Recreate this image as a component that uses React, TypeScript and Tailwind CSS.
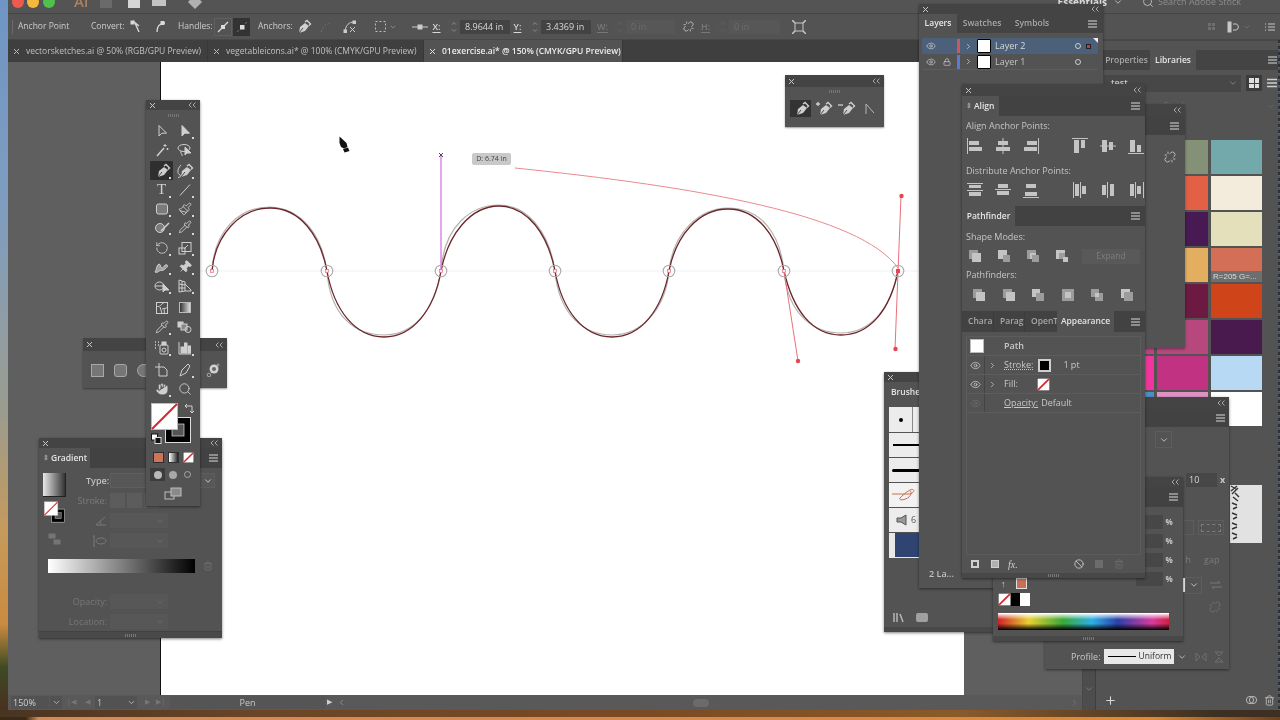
import React from "react";
import { Hand, Search, Pipette, Paintbrush, RotateCcw, Pin, Plus, ChevronDown, ChevronRight, ChevronLeft, ChevronUp, Trash2, Lock, Eye, Ban, Unlink } from "lucide-react";

const S = ({ w = 16, h = 16, vb, children, className = "" }: { w?: number; h?: number; vb?: string; children: React.ReactNode; className?: string }) => (
  <svg width={w} height={h} viewBox={vb ?? `0 0 ${w} ${h}`} className={`shrink-0 ${className}`} fill="none" stroke="currentColor" strokeWidth={1}>
    {children}
  </svg>
);

const Nib = ({ plus, minus, curve }: { plus?: boolean; minus?: boolean; curve?: boolean }) => (
  <S w={18} h={16}>
    <path d="M5 14 L6 8 L11 4 L15 7 L11 12 Z" fill="currentColor" stroke="none" />
    <path d="M5 14 L9 9" stroke="#4a4a4a" />
    <path d="M11 3 L13 1.5 L16.5 5 L15 6.5" stroke="currentColor" strokeWidth={1.4} />
    {plus && <path d="M1 3 H5 M3 1 V5" strokeWidth={1.3} />}
    {minus && <path d="M0 4 H5" strokeWidth={1.3} />}
    {curve && <path d="M5 2 C1 6 1 11 4 12 C6 12.5 5 14 2 14.5" />}
  </S>
);

const Bars = ({ r }: { r: number[][] }) => (
  <S w={18} h={18}>
    {r.map((a, i) => (
      <rect key={i} x={a[0]} y={a[1]} width={a[2]} height={a[3]} fill={a[4] ? "#9c9c9c" : "#c4c4c4"} stroke="none" />
    ))}
  </S>
);

const Close = ({ c = "#c8c8c8" }: { c?: string }) => (
  <svg width="7" height="7" viewBox="0 0 7 7" stroke={c} strokeWidth="1" className="shrink-0"><path d="M1 1 L6 6 M6 1 L1 6" /></svg>
);
const Collapse = () => (
  <svg width="8" height="6" viewBox="0 0 8 6" stroke="#a8a8a8" fill="none" className="shrink-0"><path d="M3.5 0.5 L1 3 L3.5 5.5 M7.5 0.5 L5 3 L7.5 5.5" /></svg>
);
const Menu = () => (
  <div className="flex flex-col gap-px w-[9px] shrink-0">
    <div className="h-[2px] bg-[#8e8e8e]" /><div className="h-[2px] bg-[#8e8e8e]" /><div className="h-[2px] bg-[#8e8e8e]" />
  </div>
);
const Head = ({ h = "h-[12px]", close = true }: { h?: string; close?: boolean }) => (
  <div className={`${h} bg-[#444444] flex items-center justify-between pl-[3px] pr-[4px] shrink-0`}>
    {close ? <Close /> : <span />}
    <Collapse />
  </div>
);
const Grip = () => (
  <div className="flex justify-center gap-px">
    {[0, 1, 2, 3, 4, 5].map((i) => <div key={i} className="w-px h-[3px] bg-[#777777]" />)}
  </div>
);
const Label = ({ children, className = "" }: { children: React.ReactNode; className?: string }) => (
  <div className={`h-[12px] leading-[12px] text-[9px] text-[#c4c4c4] pl-[4px] ${className}`}>{children}</div>
);

const NoneSwatch = ({ s = 12 }: { s?: number }) => (
  <svg width={s} height={s} viewBox="0 0 12 12" className="shrink-0"><rect width="12" height="12" fill="#fff" stroke="#222" /><path d="M1 11 L11 1" stroke="#d3272e" strokeWidth="1.6" /></svg>
);

const FillStroke = ({ w, h, big }: { w: number; h: number; big?: boolean }) => (
  <svg width={w} height={h} viewBox="0 0 46 42" className="shrink-0">
    <rect x="14.5" y="14.5" width="25" height="25" fill="#000" stroke="#ddd" />
    <rect x="21" y="21" width="12" height="12" fill="#555" stroke="#ddd" strokeWidth="0.7" />
    <rect x="0.5" y="0.5" width="26" height="26" fill="#fff" stroke="#bbb" />
    <path d="M1 26 L26 1" stroke="#d3272e" strokeWidth="2" />
    {big && <path d="M34 3 H41 V10 M34 3 L36 1 M34 3 L36 5 M41 10 L39 8 M41 10 L43 8" stroke="#cfcfcf" fill="none" />}
    {big && <g><rect x="0.5" y="31" width="6" height="6" fill="#fff" stroke="#111" /><rect x="4" y="34.5" width="6" height="6" fill="#111" stroke="#ddd" /></g>}
  </svg>
);

type Tool = { i: React.ReactNode; dot?: boolean; on?: boolean };
const lucide = { size: 14, strokeWidth: 1.5 };

const tools: { mt: string; a: Tool; b: Tool }[] = [
  { mt: "", a: { i: <S w={14} h={14}><path d="M4 1.5 V12 L6.8 9.2 L11.5 9.2 Z" /></S> }, b: { dot: true, i: <S w={14} h={14}><path d="M4 1.5 V12 L6.8 9.2 L11.5 9.2 Z" fill="currentColor" /></S> } },
  { mt: "", a: { i: <S w={14} h={14}><path d="M2 13 L9 5" strokeWidth={1.5} /><path d="M10 1 V4 M8.5 2.5 H11.5 M12.5 5 V7 M11.5 6 H13.5" /></S> }, b: { i: <S w={16} h={14}><ellipse cx="7" cy="5" rx="6" ry="3.5" /><path d="M4 8 C3 11 6 11 5 13" /><path d="M8 4 V12 L10 10 L14 10 Z" fill="currentColor" /></S> } },
  { mt: "mt-[2px]", a: { on: true, dot: true, i: <Nib /> }, b: { dot: true, i: <Nib curve /> } },
  { mt: "", a: { dot: true, i: <span className="text-[15px] leading-[15px] font-['Liberation_Serif',serif]">T</span> }, b: { dot: true, i: <S w={14} h={14}><path d="M2 12.5 L12 1.5" /></S> } },
  { mt: "", a: { dot: true, i: <S w={14} h={14}><rect x="1.5" y="2" width="11" height="10" rx="2" fill="#7b7b7b" /></S> }, b: { dot: true, i: <Paintbrush {...lucide} /> } },
  { mt: "-mt-px", a: { dot: true, i: <S w={16} h={14}><circle cx="6" cy="8" r="4.5" fill="#7b7b7b" /><path d="M7 11 L15 3" strokeWidth={1.6} /></S> }, b: { dot: true, i: <Pipette {...lucide} /> } },
  { mt: "mt-[2px]", a: { dot: true, i: <RotateCcw {...lucide} strokeDasharray="3 1.5" /> }, b: { dot: true, i: <S w={14} h={14}><rect x="1" y="7" width="6" height="6" /><rect x="4" y="1.5" width="9" height="9" /><path d="M6 8 L10 4" /></S> } },
  { mt: "", a: { dot: true, i: <S w={16} h={14}><path d="M1 12 C3 10 2 5 5 4 C7 4 6 8 8 8 C10 8 10 4 13 5 C15 6 12 8 11 9 C9 11 7 10 5 11 C4 12 3 13 1 12 Z" fill="#a0a0a0" /></S> }, b: { dot: true, i: <Pin {...lucide} fill="currentColor" className="rotate-45" /> } },
  { mt: "", a: { dot: true, i: <S w={16} h={14}><ellipse cx="5.5" cy="7" rx="4.5" ry="4" /><path d="M1 7 H10" /><path d="M9 5 V13 L11 11 L15 11 Z" fill="currentColor" /></S> }, b: { dot: true, i: <S w={16} h={14}><path d="M2 1 L8 3 V12 L2 13 Z M8 5 L14 11 V12 H8 M2 5 L8 6 M2 9 L8 9 M5 2 V13" /></S> } },
  { mt: "mt-[3px]", a: { i: <S w={14} h={14}><rect x="1.5" y="1.5" width="11" height="11" /><path d="M1.5 5 C5 7 6 3 9 1.5 M5 6 L7 12.5 M7 8 C9 7 11 8 12.5 6 M9 7.5 L9.5 12.5" /></S> }, b: { i: <div className="w-[12px] h-[11px] border border-[#bbbbbb] bg-[linear-gradient(90deg,#333,#ddd)]" /> } },
  { mt: "", a: { dot: true, i: <Pipette {...lucide} /> }, b: { i: <S w={15} h={14}><rect x="1" y="2" width="5" height="5" fill="currentColor" /><rect x="4" y="4" width="6" height="6" fill="#888" /><circle cx="11" cy="9.5" r="3" /></S> } },
  { mt: "mt-[2px]", a: { dot: true, i: <S w={16} h={15}><path d="M1 2 H2 M4 2 H5 M1 5 H2 M4 5 H5 M1 8 H2" strokeWidth={1.4} /><rect x="6" y="5" width="8" height="9" rx="1" /><rect x="8" y="2" width="4" height="3" fill="currentColor" /><circle cx="10" cy="10" r="2" /></S> }, b: { dot: true, i: <S w={14} h={14}><path d="M1 1 V13 H13" /><rect x="3" y="6" width="2.5" height="6" fill="currentColor" /><rect x="6.5" y="2" width="2.5" height="10" fill="currentColor" /><rect x="10" y="5" width="2.5" height="7" fill="currentColor" /></S> } },
  { mt: "mt-[3px]", a: { i: <S w={14} h={14}><path d="M4 0 V4 M0 4 H4 M4 4 H9 L12 7 V13 H4 Z" /></S> }, b: { dot: true, i: <S w={14} h={14}><path d="M2 13 L4 7 L10 1 L12 3 L8 10 Z" /></S> } },
  { mt: "", a: { dot: true, i: <Hand {...lucide} fill="currentColor" stroke="#555" strokeWidth={1} /> }, b: { i: <Search {...lucide} /> } },
];

const Cell = ({ t }: { t: Tool }) => (
  <div className={`relative w-[23px] h-[19px] flex items-center justify-center text-[#cfcfcf] ${t.on ? "bg-[#2f2f2f] rounded-[1px]" : ""}`}>
    {t.i}
    {t.dot && <span className="absolute right-[2px] bottom-[1px] w-[2px] h-[2px] bg-[#d8d8d8]" />}
  </div>
);

const wave = "M212 271 C215 235 240 208 270 208 C300 208 320 235 327 271 C334 310 355 337 384 337 C413 337 434 310 441 271 C448 235 470 206 499 206 C528 206 548 235 555 271 C562 310 583 337 612 337 C641 337 662 310 669 271 C676 235 699 209 728 209 C757 209 777 235 784 271 C793 310 812 335 841 335 C870 335 890 310 898 271";
const ghost = "M212 271 C214 232 238 207 270 207 C302 208 322 236 327 271 C330 316 355 335 384 335 C416 335 436 306 441 271 C444 225 472 205 499 205 C530 205 550 236 555 271 C559 316 585 335 612 335 C644 335 666 306 669 271 C673 232 700 208 728 208 C760 208 780 232 784 271 C788 316 815 333 841 333 C872 333 892 306 898 271";
const anchors = [212, 327, 441, 555, 669, 784, 898];

const Artwork = () => (
  <svg className="absolute inset-0" width="803" height="633" viewBox="161 62 803 633" fill="none">
    <path d="M161 271 H964" stroke="#eef1f3" />
    <path d={ghost} stroke="#b5b0b0" strokeWidth="1.2" />
    <path d={wave} stroke="#6a272b" strokeWidth="1.3" />
    <path d="M441 155 V271" stroke="#d678e4" strokeWidth="1.3" />
    <path d="M439 153 L443 157 M443 153 L439 157" stroke="#5a3b66" />
    <path d="M515 168 C700 187 860 215 898 268" stroke="#ea8a90" />
    <path d="M901 196 L895 349" stroke="#ea7079" />
    <path d="M784 271 L798 361" stroke="#ea7079" />
    {anchors.map((x) => (
      <g key={x}>
        <circle cx={x} cy="271" r="5.8" stroke="#a9a9a9" strokeWidth="1.1" />
        <rect x={x - 1.5} y="269.5" width="3" height="3" stroke="#ee6b78" fill="#ffe0e4" strokeWidth="0.7" />
      </g>
    ))}
    <rect x="896" y="269" width="4" height="4" fill="#e8434f" />
    <circle cx="901.5" cy="196" r="2.2" fill="#e8434f" />
    <circle cx="895.5" cy="349" r="2.2" fill="#e8434f" />
    <circle cx="798" cy="361" r="2.2" fill="#e8434f" />
    <path d="M339.5 136.5 L346.5 143 L347.5 147 L344 148.5 L341 147 L339.5 143 Z" fill="#111" />
    <path d="M343 149 L348 147.5 L349.5 151 L344.5 152.5 Z" fill="#111" />
  </svg>
);

const lib = [
  ["#5b7a80", "#849176", "#74a9ac"],
  ["#b84a35", "#e35f45", "#f3ecdc"],
  ["#2f1538", "#481a54", "#e5e0bc"],
  ["#b08040", "#e3ae5f", "#d46f57"],
  ["#7a1a3a", "#6c1a42", "#cf4419"],
  ["#b6487e", "#b6487e", "#481a4e"],
  ["#f0369e", "#c23283", "#b7d9f3"],
  ["#4d8fc4", "#de93c3", "#ffffff"],
];

const Field = ({ label, v, dim, w }: { label: string; v: string; dim?: boolean; w: string }) => (
  <div className={`flex items-center ${dim ? "text-[#777777]" : "text-[#d8d8d8]"}`}>
    <span className="text-[9px] font-semibold underline underline-offset-2 w-[13px] text-center">{label}</span>
    <div className={`${w} h-[14px] ml-[4px] flex items-center ${dim ? "bg-[#575757]" : "bg-[#434343]"}`}>
      <div className={`w-[13px] h-full flex flex-col items-center justify-center ${dim ? "text-[#6f6f6f]" : "text-[#cfcfcf]"} bg-[#545454]`}>
        <ChevronUp size={8} strokeWidth={1.5} /><ChevronDown size={8} strokeWidth={1.5} />
      </div>
      <span className={`ml-[5px] text-[9px] ${dim ? "text-[#6c6c6c]" : ""}`}>{v}</span>
    </div>
  </div>
);

const Dd = ({ w }: { w: string }) => (
  <div className={`${w} h-[15px] bg-[#575757] flex items-center justify-end pr-[3px] text-[#6d6d6d]`}><ChevronDown size={10} /></div>
);

const Pct = () => (
  <div className="flex items-center justify-end gap-[1px] h-[14px]">
    <div className="w-[27px] h-[14px] bg-[#474747]" />
    <span className="w-[10px] text-[8px] font-bold text-[#c8c8c8] text-center">%</span>
  </div>
);

const AppRow = ({ eye = true, children, mid }: { eye?: boolean; children: React.ReactNode; mid?: boolean }) => (
  <div className="h-[19px] flex items-center border-b border-[#5d5d5d] text-[9px] text-[#c8c8c8]">
    <div className={`w-[18px] h-full flex items-center justify-center border-r border-[#444444] ${eye ? "text-[#cdcdcd]" : "text-[#6f6f6f]"}`}><Eye size={11} strokeWidth={1.6} /></div>
    <div className="w-[19px] pl-[3px] flex text-[#c8c8c8]">{mid && <ChevronRight size={9} />}</div>
    {children}
  </div>
);

const pathIcon = (r: number[][]) => <Bars r={r} />;

export default function App() {
  return (
    <div className="relative w-[1280px] h-[720px] overflow-hidden flex flex-col bg-[#3a2c20] font-['Open_Sans',sans-serif] blur-[0.4px]">
      <div className="flex h-[710px]">
        <div className="w-[8px] bg-[linear-gradient(180deg,#6f95c4_0%,#7f9dbf_30%,#9b9c8e_58%,#c59a5a_75%,#c98b3f_88%,#3f4a24_94%,#4a3020_100%)]" />
        <div className="flex-1 flex flex-col min-w-0 bg-[#535353]">
          {/* title bar */}
          <div className="h-[14px] overflow-hidden bg-[#545454] flex items-center shrink-0 border-b border-[#454545]">
            <div className="flex items-center -mt-[10px] w-full">
              <span className="ml-[4px] w-[12px] h-[12px] rounded-full bg-[#ee5a4f]" />
              <span className="ml-[3px] w-[12px] h-[12px] rounded-full bg-[#f5b93c]" />
              <span className="ml-[4px] w-[12px] h-[12px] rounded-full bg-[#4fc14c]" />
              <span className="ml-[19px] text-[15px] leading-[15px] font-semibold text-[#b0805c]">Ai</span>
              <span className="ml-[12px] w-[12px] h-[12px] bg-[#6a6a6a]" />
              <span className="ml-[16px] w-[12px] h-[12px] bg-[#d5d5d5]" />
              <span className="ml-[12px] w-[14px] h-[9px] bg-[#c4c4c4]" />
              <span className="ml-[24px] w-[10px] h-[10px] bg-[#b0b0b0] rotate-45" />
              <span className="ml-auto text-[10px] leading-[10px] font-bold text-[#dcdcdc]">Essentials</span>
              <ChevronDown size={10} className="ml-[6px] text-[#cfcfcf]" />
              <Search size={12} className="ml-[19px] text-[#b5b5b5]" />
              <span className="ml-[4px] mr-[39px] text-[9px] leading-[10px] text-[#8c8c8c]">Search Adobe Stock</span>
            </div>
          </div>
          {/* control bar */}
          <div className="h-[26px] shrink-0 bg-[#535353] border-b border-[#484848] flex items-center text-[8.5px] font-medium text-[#cccccc] relative">
            <div className="ml-[4px] w-px h-[14px] bg-[#6a6a6a]" />
            <span className="ml-[5px] w-[49px] whitespace-nowrap">Anchor Point</span>
            <span className="ml-[24px] w-[33px]">Convert:</span>
            <div className="ml-[4px] w-[16px] flex justify-center text-[#d8d8d8]"><S w={12} h={13}><path d="M3 1 L9 6 M5 3 L9 12" strokeWidth={1.4} /><rect x="1" y="1" width="3" height="3" fill="currentColor" /></S></div>
            <div className="ml-[8px] w-[16px] flex justify-center text-[#d8d8d8]"><S w={12} h={13}><path d="M3 12 C3 6 5 4 11 3" strokeWidth={1.3} /><rect x="7" y="1.5" width="3" height="3" fill="currentColor" /></S></div>
            <span className="ml-[10px] w-[36px]">Handles:</span>
            <div className="w-[18px] h-[18px] flex items-center justify-center text-[#dcdcdc] border border-[#5f5f5f]"><S w={12} h={12}><path d="M1 11 L11 1" strokeWidth={1.3} /><rect x="4.5" y="4.5" width="3" height="3" fill="currentColor" /></S></div>
            <div className="ml-px w-[17px] h-[18px] flex items-center justify-center bg-[#333333] text-[#dcdcdc]"><S w={12} h={12}><rect x="4.5" y="4.5" width="3.5" height="3.5" fill="currentColor" /><path d="M1 11 L3 9 M9 3 L11 1" stroke="#6f6f6f" /></S></div>
            <span className="ml-[8px] w-[37px]">Anchors:</span>
            <div className="w-[16px] flex justify-center text-[#d0d0d0]"><Nib /></div>
            <div className="ml-[7px] w-[16px] flex justify-center text-[#6e6e6e]"><S w={12} h={12}><path d="M1 11 C3 5 6 3 11 2" strokeDasharray="2 1.5" /></S></div>
            <div className="ml-[8px] w-[16px] flex justify-center text-[#cccccc]"><S w={14} h={13}><path d="M2 11 C3 5 6 2 11 2" /><rect x="1" y="10" width="2.5" height="2.5" fill="currentColor" /><rect x="10" y="1" width="2.5" height="2.5" fill="currentColor" /><path d="M7 7 L12 12 M12 7 L7 12" /></S></div>
            <div className="ml-[14px] w-[17px] flex justify-center text-[#bdbdbd]"><S w={13} h={13}><rect x="1.5" y="1.5" width="10" height="10" strokeDasharray="2 2" /></S></div>
            <ChevronDown size={8} className="text-[#a0a0a0]" />
            <div className="ml-[15px] w-[16px] flex justify-center text-[#cccccc]"><S w={16} h={8}><path d="M0 4 H16" /><rect x="6" y="2" width="4" height="4" fill="currentColor" /></S></div>
            <div className="ml-[2px]"><Field label="X:" v="8.9644 in" w="w-[63px]" /></div>
            <div className="ml-[1px]"><Field label="Y:" v="3.4369 in" w="w-[63px]" /></div>
            <div className="ml-[5px]"><Field label="W:" v="0 in" dim w="w-[62px]" /></div>
            <div className="ml-[5px] w-[16px] flex justify-center text-[#bdbdbd]"><Unlink size={11} /></div>
            <div className="ml-[3px]"><Field label="H:" v="0 in" dim w="w-[64px]" /></div>
            <div className="ml-[12px] w-[14px] text-[#c8c8c8]"><S w={14} h={14}><rect x="3" y="3" width="8" height="8" /><path d="M0 0 L3 3 M14 0 L11 3 M0 14 L3 11 M14 14 L11 11" strokeWidth={1.5} /></S></div>
            <div className="ml-auto flex items-center pr-[5px]">
              <div className="grid grid-cols-2 gap-px"><i className="block w-[3px] h-[3px] bg-[#6f6f6f]" /><i className="block w-[3px] h-[3px] bg-[#6f6f6f]" /><i className="block w-[3px] h-[3px] bg-[#6f6f6f]" /><i className="block w-[3px] h-[3px] bg-[#6f6f6f]" /></div>
              <div className="ml-[12px] text-[#c8c8c8]"><S w={12} h={12}><rect x="1" y="1" width="3" height="10" fill="currentColor" /><path d="M6 3 H9 C12 3 12 9 9 9 H6" /></S></div>
              <ChevronDown size={8} className="ml-[4px] text-[#777777]" />
              <div className="ml-[14px] text-[#c8c8c8]"><S w={10} h={10}><path d="M0 2 H1 M3 2 H10 M0 5 H1 M3 5 H10 M0 8 H1 M3 8 H10" /></S></div>
            </div>
          </div>
          {/* body */}
          <div className="flex-1 flex min-h-0">
            <div className="w-[1074px] flex flex-col">
              <div className="h-[22px] bg-[#3f3f3f] flex items-stretch text-[8.5px] shrink-0">
                {[
                  ["vectorsketches.ai @ 50% (RGB/GPU Preview)", "w-[200px]", false],
                  ["vegetableicons.ai* @ 100% (CMYK/GPU Preview)", "w-[216px]", false],
                  ["01exercise.ai* @ 150% (CMYK/GPU Preview)", "w-[199px]", true],
                ].map(([t, w, on]) => (
                  <div key={t as string} className={`${w} flex items-center pl-[5px] border-r border-[#383838] ${on ? "bg-[#535353] text-[#ececec] font-semibold" : "text-[#c0c0c0] font-medium"}`}>
                    <Close c={on ? "#e0e0e0" : "#bbbbbb"} />
                    <span className="ml-[6px] whitespace-nowrap">{t}</span>
                  </div>
                ))}
              </div>
              <div className="flex-1 bg-[#5f5f5f] flex min-h-0 overflow-hidden">
                <div className="ml-[152px] w-[804px] h-full bg-white border-l border-[#111111] relative shrink-0">
                  <Artwork />
                  <div className="absolute left-[311px] top-[91px] w-[39px] h-[12px] rounded-[2px] bg-[#c9c9c9] text-[7px] leading-[12px] text-[#444444] text-center">D: 6.74 in</div>
                </div>
              </div>
              <div className="h-[15px] bg-[#595959] shrink-0 flex items-center text-[9px] text-[#c8c8c8]">
                <div className="ml-[3px] w-[38px] h-[13px] bg-[#525252] pl-[2px] leading-[13px] text-[#cfcfcf]">150%</div>
                <div className="ml-px w-[12px] h-[13px] bg-[#525252] flex items-center justify-center"><ChevronDown size={9} /></div>
                <div className="ml-[5px] w-[23px] flex justify-between text-[#767676] text-[7px]"><span>|◀</span><span>◀</span></div>
                <div className="ml-[5px] w-[30px] h-[13px] bg-[#525252] pl-[2px] leading-[13px]">1</div>
                <div className="w-[12px] h-[13px] bg-[#525252] flex items-center justify-center"><ChevronDown size={9} /></div>
                <div className="ml-[8px] w-[20px] flex justify-between text-[#767676] text-[7px]"><span>▶</span><span>▶|</span></div>
                <div className="ml-[5px] w-[155px] h-[13px] bg-[#555555] text-center leading-[13px]">Pen</div>
                <span className="ml-[2px] text-[7px] text-[#d0d0d0]">▶</span>
                <ChevronLeft size={9} className="ml-[5px] text-[#9a9a9a]" />
                <div className="ml-[347px] w-[16px] h-[8px] rounded-[4px] bg-[#6b6b6b]" />
                <ChevronRight size={9} className="ml-auto mr-[3px] text-[#7c7c7c]" />
              </div>
            </div>
            <div className="w-[13px] bg-[#4d4d4d] flex flex-col justify-end items-center pb-[16px] text-[#7c7c7c] border-l border-[#474747]"><ChevronDown size={10} /></div>
            {/* dock */}
            <div className="w-[183px] flex flex-col border-l border-[#3f3f3f] bg-[#535353]">
              <div className="h-[10px] border-t border-[#474747]" />
              <div className="h-[20px] bg-[#444444] flex items-stretch text-[8.5px] font-semibold pl-[7px] shrink-0">
                <div className="w-[47px] text-[#a8a8a8] flex items-center justify-center">Properties</div>
                <div className="w-[46px] bg-[#535353] text-[#e6e6e6] flex items-center justify-center">Libraries</div>
                <div className="ml-auto flex items-center pr-[1px]"><Menu /></div>
              </div>
              <div className="flex items-center h-[18px] mt-[4px] shrink-0">
                <div className="ml-[8px] w-[137px] h-[17px] bg-[#474747] flex items-center pl-[7px] text-[9px] font-semibold text-[#c8c8c8]">test<ChevronDown size={10} className="ml-auto mr-[3px] text-[#8a8a8a]" /></div>
                <div className="ml-[5px] w-[16px] h-[16px] bg-[#3b3b3b] grid grid-cols-2 gap-px p-[3px]"><i className="block bg-[#dedede]" /><i className="block bg-[#dedede]" /><i className="block bg-[#dedede]" /><i className="block bg-[#dedede]" /></div>
                <div className="ml-[5px] text-[#cfcfcf]"><S w={10} h={10}><path d="M0 1.5 H10 M0 5 H10 M0 8.5 H10" strokeWidth={1.5} /></S></div>
              </div>
              <div className="h-[20px] mt-[4px] flex items-center justify-end pr-[3px] text-[9px] text-[#6c6c6c] shrink-0"><span className="mr-[80px]">Stock</span><ChevronDown size={9} /></div>
              <div className="ml-[7px] mt-[24px] grid grid-cols-[51px_51px_51px] auto-rows-[34px] gap-x-[3px] gap-y-[2px] shrink-0">
                {lib.flatMap((row, r) => row.map((c, i) => (
                  r === 3 && i === 2 ? (
                    <div key={`${r}${i}`} className="flex flex-col" style={{ background: "#6e6e6e" }}>
                      <div className="h-[23px]" style={{ background: c }} />
                      <div className="flex-1 text-[8px] leading-[11px] text-[#dddddd] whitespace-nowrap pl-[2px] font-['Liberation_Sans',sans-serif]">R=205 G=...</div>
                    </div>
                  ) : <div key={`${r}${i}`} style={{ background: c }} />
                )))}
              </div>
              <div className="ml-[134px] mt-[59px] w-[32px] h-[58px] bg-[#e2e2e2] shrink-0">
                <S w={32} h={58} className="text-[#333333]"><path d="M1 1 L6 4 M7 1 L1 6 M8 3 L2 9 M5 8 L9 12 M3 12 L8 16 M2 18 L7 20 M3 24 L7 22 M2 28 L7 30 M3 34 L7 32 M2 38 L7 40 M2 44 L7 42 M2 48 L7 50 M3 54 L7 52" strokeWidth={1.4} /></S>
              </div>
              <div className="mt-auto h-[20px] flex items-center justify-between pl-[8px] pr-[3px] text-[#d8d8d8] shrink-0">
                <Plus size={13} strokeWidth={2} />
                <div className="flex items-center gap-[7px] text-[#b8b8b8]"><S w={12} h={10}><circle cx="5" cy="5" r="3.6" /><circle cx="8" cy="5" r="3.6" /></S><Trash2 size={11} /></div>
              </div>
            </div>
            <div className="w-[2px] bg-[repeating-linear-gradient(180deg,#303030_0,#303030_3px,#705f4d_3px,#705f4d_4px,#46566a_4px,#46566a_6px)]" />
          </div>
        </div>
      </div>
      <div className="h-[7px] bg-[linear-gradient(90deg,#4a3420,#6b4526_20%,#7a4a24_50%,#8a5a2a_75%,#3d3023_95%)]" />
      <div className="h-[3px] bg-[linear-gradient(90deg,#3a2a1a_2%,#d48a58_3%,#d98a4a_60%,#e0882f_90%,#6a4020)]" />

      {/* Pen mini panel */}
      <div className="absolute left-[785px] top-[75px] w-[99px] h-[52px] bg-[#535353] rounded-t-[2px] shadow-[0_1px_2px_rgba(0,0,0,0.4)]">
        <Head />
        <div className="mt-[3px]"><Grip /></div>
        <div className="mt-[7px] flex items-center pl-[5px] text-[#cfcfcf]">
          <div className="w-[21px] h-[17px] bg-[#333333] flex items-center justify-center"><Nib /></div>
          <div className="ml-[2px] w-[21px] flex justify-center"><Nib plus /></div>
          <div className="ml-[2px] w-[22px] flex justify-center"><Nib minus /></div>
          <div className="ml-[1px] w-[22px] flex justify-center text-[#b8b8b8]"><S w={10} h={12}><path d="M1 11 V1 L9 10" /></S></div>
        </div>
      </div>

      {/* Shapes panel */}
      <div className="absolute left-[83px] top-[338px] w-[144px] h-[50px] bg-[#535353] rounded-t-[2px] shadow-[0_1px_2px_rgba(0,0,0,0.4)]">
        <Head h="h-[13px]" />
        <div className="mt-[12px] flex items-center pl-[8px] text-[#a8a8a8]">
          <div className="w-[13px] h-[13px] bg-[#767676] border border-[#a8a8a8]" />
          <div className="ml-[10px] w-[13px] h-[13px] rounded-[3px] bg-[#767676] border border-[#a8a8a8]" />
          <div className="ml-[10px] w-[14px] h-[13px] rounded-full bg-[#767676] border border-[#a8a8a8]" />
          <div className="ml-auto mr-[7px]"><S w={14} h={14}><circle cx="8" cy="6" r="4.5" fill="#d0d0d0" stroke="none" /><circle cx="8" cy="6" r="2" fill="#666" stroke="none" /><circle cx="3" cy="12" r="1.8" /><circle cx="12" cy="2" r="1" /></S></div>
        </div>
      </div>

      {/* Gradient panel */}
      <div className="absolute left-[39px] top-[438px] w-[183px] h-[200px] bg-[#535353] rounded-t-[2px] shadow-[0_1px_3px_rgba(0,0,0,0.5)] flex flex-col text-[9px]">
        <Head h="h-[10px]" />
        <div className="h-[20px] bg-[#424242] flex items-stretch justify-between pr-[4px] shrink-0">
          <div className="w-[51px] bg-[#535353] flex items-center pl-[4px] text-[8.5px] font-semibold text-[#e4e4e4]">
            <span className="text-[7px] text-[#a0a0a0] mr-[2px]">⇕</span>Gradient
          </div>
          <div className="flex items-center"><Menu /></div>
        </div>
        <div className="flex mt-[5px]">
          <div className="w-[47px] pl-[4px] shrink-0">
            <div className="w-[23px] h-[24px] border-r border-b border-[#222222] bg-[linear-gradient(90deg,#e8e8e8,#333)]" />
            <div className="mt-[4px] ml-[1px]"><FillStroke w={24} h={23} /></div>
            <div className="mt-[9px] ml-[5px] text-[#747474]"><S w={14} h={12}><rect x="1" y="1" width="6" height="4" fill="currentColor" /><rect x="6" y="7" width="6" height="4" fill="currentColor" /></S></div>
          </div>
          <div className="flex-1 flex flex-col">
            <div className="flex items-center h-[15px]">
              <span className="w-[21px] font-semibold text-[#c0c0c0] text-right">Type:</span>
              <div className="ml-[3px] w-[105px] h-[15px] bg-[#575757] border border-[#5e5e5e] flex items-center justify-end pr-[1px] text-[#dcdcdc]"><ChevronDown size={10} /></div>
            </div>
            <div className="flex items-center h-[15px] mt-[5px] ml-[-9px]">
              <span className="w-[30px] text-[#7b7b7b] text-right">Stroke:</span>
              <div className="ml-[3px] w-[15px] h-[15px] bg-[#5c5c5c]" />
              <div className="ml-[2px] w-[15px] h-[15px] bg-[#5c5c5c]" />
              <div className="ml-[2px] w-[15px] h-[15px] bg-[#5c5c5c]" />
            </div>
            <div className="flex items-center h-[15px] mt-[5px]">
              <div className="w-[21px] flex justify-end text-[#787878]"><S w={12} h={10}><path d="M1 9 L10 1 M1 9 H11 M6 9 C6 7 5 6 5 5" /></S></div>
              <div className="ml-[3px]"><Dd w="w-[58px]" /></div>
            </div>
            <div className="flex items-center h-[15px] mt-[5px]">
              <div className="w-[21px] flex justify-end text-[#787878]"><S w={14} h={12}><ellipse cx="8" cy="6" rx="5" ry="3" /><path d="M1 1 V11 M0 1 H2 M0 11 H2" /></S></div>
              <div className="ml-[3px]"><Dd w="w-[58px]" /></div>
            </div>
          </div>
        </div>
        <div className="flex items-center mt-[11px] ml-[9px]">
          <div className="w-[147px] h-[14px] bg-[linear-gradient(90deg,#ffffff,#000000)]" />
          <Trash2 size={10} className="ml-[8px] text-[#6e6e6e]" />
        </div>
        <div className="flex items-center justify-end mt-[21px] pr-[54px] h-[15px] text-[#777777]"><span className="mr-[3px]">Opacity:</span><Dd w="w-[58px]" /></div>
        <div className="flex items-center justify-end mt-[5px] pr-[54px] h-[15px] text-[#777777]"><span className="mr-[3px]">Location:</span><Dd w="w-[58px]" /></div>
        <div className="mt-auto h-[7px] bg-[#494949] border-t border-[#424242] flex items-center justify-center"><Grip /></div>
      </div>

      {/* Tools panel */}
      <div className="absolute left-[146px] top-[100px] w-[54px] h-[406px] bg-[#535353] rounded-t-[2px] shadow-[0_1px_3px_rgba(0,0,0,0.5)] flex flex-col">
        <Head h="h-[10px]" />
        <div className="h-[11px] flex items-center"><div className="w-full"><Grip /></div></div>
        <div className="pl-[4px]">
          {tools.map((r, i) => (
            <div key={i} className={`flex ${r.mt}`}><Cell t={r.a} /><Cell t={r.b} /></div>
          ))}
        </div>
        <div className="mt-[5px] ml-[5px]"><FillStroke w={46} h={42} big /></div>
        <div className="mt-[7px] ml-[7px] flex items-center gap-[4px]">
          <div className="w-[11px] h-[11px] bg-[#cf7458] border border-[#2f2f2f]" />
          <div className="w-[11px] h-[11px] bg-[linear-gradient(90deg,#fff,#222)] border border-[#2f2f2f]" />
          <NoneSwatch s={11} />
        </div>
        <div className="mt-[5px] ml-[4px] flex h-[13px]">
          <div className="w-[15px] bg-[#3c3c3c] flex items-center justify-center"><div className="w-[8px] h-[8px] rounded-full bg-[#b8b8b8]" /></div>
          <div className="w-[15px] flex items-center justify-center"><div className="w-[8px] h-[8px] rounded-full bg-[#a8a8a8]" /></div>
          <div className="w-[15px] flex items-center justify-center"><div className="w-[7px] h-[7px] rounded-full border border-[#a8a8a8]" /></div>
        </div>
        <div className="mt-[6px] flex justify-center text-[#c0c0c0]"><S w={18} h={13}><rect x="1" y="5" width="9" height="7" /><rect x="7" y="1" width="10" height="8" fill="#8a8a8a" /></S></div>
      </div>

      {/* Brushes */}
      <div className="absolute left-[884px] top-[372px] w-[120px] h-[260px] bg-[#535353] rounded-t-[2px] shadow-[0_1px_3px_rgba(0,0,0,0.5)] flex flex-col">
        <Head h="h-[10px]" />
        <div className="h-[20px] bg-[#444444] shrink-0 flex items-center"><span className="pl-[7px] h-full flex items-center pr-[8px] bg-[#535353] text-[8.5px] font-semibold text-[#e2e2e2]">Brushes</span></div>
        <div className="ml-[5px] mt-[5px] w-[30px] flex flex-col gap-px">
          <div className="h-[25px] bg-[#ececec] flex items-center pl-[10px]"><div className="w-[4px] h-[4px] rounded-full bg-black" /><div className="ml-[9px] w-px h-full bg-[#888888]" /></div>
          <div className="h-[24px] bg-[#ececec] flex items-center pl-[4px]"><div className="w-full h-[2px] bg-black" /></div>
          <div className="h-[24px] bg-[#ececec] flex items-center pl-[3px]"><div className="w-full h-[3px] rounded-l-full bg-black" /></div>
          <div className="h-[24px] bg-[#f2f2f2] flex items-center pl-[3px]"><S w={27} h={14} className="text-[#c8704a]"><path d="M0 6 H18 C24 4 22 0 18 2 C14 4 10 8 8 10 C6 13 14 12 17 9 C19 7 20 4 18 3" /></S></div>
          <div className="h-[24px] bg-[#ececec] flex items-center pl-[7px] text-[#555555]"><S w={12} h={12}><path d="M1 4 H5 L10 1 V11 L5 8 H1 Z" fill="#999" /></S><span className="ml-[3px] text-[9px]">6</span></div>
          <div className="h-[25px] bg-[#e8e8e8] pl-[6px]"><div className="w-[24px] h-[24px] bg-[#2f4470]" /></div>
        </div>
        <div className="mt-auto h-[19px] flex items-center pl-[9px] text-[#bdbdbd]">
          <S w={14} h={11}><path d="M1 1 V10 M4 1 V10 M7 2 L10 10" strokeWidth={1.4} /></S>
          <div className="ml-[9px] w-[12px] h-[9px] bg-[#a0a0a0] rounded-[2px]" />
        </div>
        <div className="h-[5px] bg-[#484848]" />
      </div>

      {/* Behind panel */}
      <div className="absolute left-[1100px] top-[104px] w-[85px] h-[244px] bg-[#535353] rounded-t-[2px] shadow-[0_1px_3px_rgba(0,0,0,0.4)] flex flex-col">
        <Head h="h-[12px]" close={false} />
        <div className="h-[19px] bg-[#424242] flex items-center justify-end pr-[6px]"><Menu /></div>
        <div className="flex justify-end pr-[9px] mt-[16px] text-[#b8b8b8]"><Unlink size={12} /></div>
      </div>

      {/* Stroke */}
      <div className="absolute left-[1045px] top-[397px] w-[184px] h-[272px] bg-[#535353] rounded-t-[2px] shadow-[0_1px_3px_rgba(0,0,0,0.5)] flex flex-col">
        <Head h="h-[12px]" close={false} />
        <div className="h-[18px] bg-[#424242] flex items-center justify-end pr-[4px]"><Menu /></div>
        <div className="flex justify-end pr-[57px] mt-[4px]"><div className="w-[17px] h-[17px] border border-[#5d5d5d] flex items-center justify-center text-[#d0d0d0]"><ChevronDown size={10} /></div></div>
        <div className="flex items-center justify-end mt-[25px] pr-[4px]">
          <div className="w-[31px] h-[14px] bg-[#474747] text-[9px] pl-[3px] leading-[14px] text-[#d8d8d8]">10</div>
          <span className="ml-[3px] w-[5px] text-[9px] font-bold text-[#c8c8c8]">x</span>
        </div>
        <div className="flex justify-end pr-[5px] mt-[33px] gap-[4px]">
          <div className="w-[26px] h-[15px] border border-[#5d5d5d]" />
          <div className="w-[26px] h-[15px] border border-[#5d5d5d] flex items-center justify-center"><div className="w-[20px] h-[8px] border border-dashed border-[#7c7c7c]" /></div>
        </div>
        <div className="flex justify-end pr-[5px] mt-[18px] text-[9px] text-[#7c7c7c] gap-[13px]"><span>h</span><span className="w-[20px]">gap</span></div>
        <div className="flex justify-end items-center pr-[7px] mt-[10px]">
          <div className="w-[6px] h-[14px] bg-[#e8e8e8]" />
          <div className="w-[17px] h-[17px] flex items-center justify-center text-[#d0d0d0] border border-[#5d5d5d]"><ChevronDown size={10} /></div>
          <div className="ml-[8px] text-[#777777]"><S w={12} h={10}><path d="M0 3 H10 L8 1 M12 7 H2 L4 9" /></S></div>
        </div>
        <div className="flex justify-end pr-[8px] mt-[7px] text-[#6f6f6f]"><Unlink size={12} /></div>
        <div className="mt-auto mb-[5px] flex items-center pl-[26px] text-[9px]">
          <span className="text-[#c8c8c8]">Profile:</span>
          <div className="ml-[3px] w-[70px] h-[15px] bg-[#e8e8e8] flex items-center text-[#333333] pl-[4px] text-[8.5px] font-medium">
            <div className="w-[28px] h-px bg-black" /><span className="ml-[3px]">Uniform</span>
          </div>
          <div className="ml-px w-[14px] flex justify-center text-[#c8c8c8]"><ChevronDown size={10} /></div>
          <div className="ml-[6px] text-[#6f6f6f]"><S w={12} h={10}><path d="M1 1 L5 5 L1 9 Z M11 1 L7 5 L11 9 Z" /></S></div>
          <div className="ml-[7px] text-[#6f6f6f]"><S w={10} h={12}><path d="M1 1 H9 L5 5 Z M1 11 H9 L5 7 Z" /></S></div>
        </div>
      </div>

      {/* Layers */}
      <div className="absolute left-[919px] top-[4px] w-[184px] h-[584px] bg-[#535353] rounded-t-[2px] shadow-[0_1px_3px_rgba(0,0,0,0.5)] flex flex-col">
        <Head h="h-[10px]" />
        <div className="h-[19px] bg-[#444444] flex items-stretch text-[8.5px] font-semibold shrink-0">
          <div className="w-[38px] bg-[#535353] text-[#e8e8e8] flex items-center justify-center">Layers</div>
          <div className="ml-[6px] w-[38px] text-[#a8a8a8] flex items-center justify-center">Swatches</div>
          <div className="ml-[13px] w-[36px] text-[#a8a8a8] flex items-center justify-center">Symbols</div>
          <div className="ml-auto flex items-center pr-[6px]"><Menu /></div>
        </div>
        <div className="mt-[5px] ml-[3px] mr-[5px]">
          {[
            { n: "Layer 2", bar: "#c85a5e", on: true },
            { n: "Layer 1", bar: "#5c7ad0", on: false },
          ].map((l) => (
            <div key={l.n} className={`relative h-[16px] flex items-center text-[9px] ${l.on ? "bg-[#4d6079] text-[#d8d8d8]" : "text-[#c4c4c4] border-b border-[#5d5d5d]"}`}>
              <div className="w-[17px] flex justify-center text-[#cdcdcd]"><Eye size={10} strokeWidth={1.6} /></div>
              <div className="w-[15px] flex justify-center text-[#d0d0d0]">{!l.on && <Lock size={8} strokeWidth={2} />}</div>
              <div className="ml-[3px] w-[3px] h-[14px]" style={{ background: l.bar }} />
              <div className="ml-[3px] w-[10px] flex justify-center text-[#d0d0d0]"><ChevronRight size={9} /></div>
              <div className="ml-[4px] w-[14px] h-[14px] bg-white border border-black rounded-[1px]" />
              <span className="ml-[4px]">{l.n}</span>
              <div className="ml-auto mr-[17px] w-[6px] h-[6px] rounded-full border border-[#cccccc]" />
              {l.on && <div className="absolute right-[7px] w-[5px] h-[5px] bg-[#d3333f] border border-[#222222]" />}
              {l.on && <div className="absolute right-0 top-0 w-0 h-0 border-t-[5px] border-l-[5px] border-t-[#eeeeee] border-l-transparent" />}
            </div>
          ))}
        </div>
        <div className="mt-auto mb-[8px] pl-[10px] text-[9px] font-semibold text-[#c0c0c0]">2 La...</div>
      </div>

      {/* Color */}
      <div className="absolute left-[993px] top-[477px] w-[190px] h-[164px] bg-[#535353] rounded-t-[2px] shadow-[0_1px_3px_rgba(0,0,0,0.5)] flex flex-col">
        <Head h="h-[10px]" close={false} />
        <div className="h-[20px] bg-[#424242] flex items-center justify-end pr-[5px]"><Menu /></div>
        <div className="mt-[8px] flex flex-col gap-[5px] pr-[9px]"><Pct /><Pct /><Pct /><Pct /></div>
        <div className="-mt-[8px] h-[11px] pl-[8px] flex items-center">
          <span className="w-[8px] text-[9px] leading-[11px] font-bold text-[#d0d0d0]">↑</span>
          <div className="ml-[7px] w-[11px] h-[11px] bg-[#c96f58] border border-[#e0e0e0]" />
        </div>
        <div className="ml-[5px] mt-[4px] flex h-[13px]">
          <NoneSwatch s={13} /><div className="w-[9px] bg-black" /><div className="w-[10px] bg-white" />
        </div>
        <div className="ml-[5px] mt-[7px] w-[171px] h-[17px] border-t border-white bg-[linear-gradient(180deg,rgba(255,255,255,0.85),rgba(255,255,255,0)_35%,rgba(0,0,0,0)_60%,#000000),linear-gradient(90deg,#d0202a,#e8d030_18%,#39a838_38%,#2db0e8_55%,#2c3fa8_70%,#d83aa0_90%,#d02040)]" />
        <div className="mt-auto h-[5px] bg-[#484848] flex items-center justify-center"><Grip /></div>
      </div>

      {/* Align / Pathfinder / Appearance */}
      <div className="absolute left-[962px] top-[84px] w-[183px] h-[494px] bg-[#535353] rounded-t-[2px] shadow-[0_1px_3px_rgba(0,0,0,0.5)] flex flex-col">
        <Head h="h-[12px]" />
        <div className="h-[20px] bg-[#424242] flex items-stretch justify-between pr-[5px] shrink-0">
          <div className="w-[37px] bg-[#535353] flex items-center pl-[4px] text-[8.5px] font-semibold text-[#e4e4e4]"><span className="text-[7px] text-[#a0a0a0] mr-[2px]">⇕</span>Align</div>
          <div className="flex items-center"><Menu /></div>
        </div>
        <Label className="mt-[4px]">Align Anchor Points:</Label>
        <div className="mt-[5px] h-[18px] flex pl-[4px] gap-[10px]">
          <Bars r={[[1,1,1,16],[3,4,10,4],[3,10,13,4]]} /><Bars r={[[8.5,1,1,16],[4,4,10,4],[2,10,14,4]]} /><Bars r={[[16,1,1,16],[5,4,10,4],[2,10,13,4]]} />
          <div className="w-[17px]" />
          <Bars r={[[1,1,16,1],[3,3,5,13],[10,3,4,8]]} /><Bars r={[[1,8.5,16,1],[3,3,5,12],[10,5,4,8]]} /><Bars r={[[1,16,16,1],[3,3,5,12],[10,8,4,7]]} />
        </div>
        <Label className="mt-[10px]">Distribute Anchor Points:</Label>
        <div className="mt-[4px] h-[18px] flex pl-[4px] gap-[10px]">
          <Bars r={[[1,2,16,1],[3,4,12,3],[1,9,16,1],[3,11,12,4]]} /><Bars r={[[1,8,16,1],[4,3,10,4],[3,10,12,4]]} /><Bars r={[[1,16,16,1],[4,3,10,4],[3,11,12,4]]} />
          <div className="w-[17px]" />
          <Bars r={[[2,1,1,16],[4,3,4,12],[9,1,1,16],[11,5,4,8]]} /><Bars r={[[8,1,1,16],[3,4,4,10],[11,3,4,12]]} /><Bars r={[[16,1,1,16],[3,3,4,12],[10,5,4,8],[8,1,1,16]]} />
        </div>
        <div className="h-[7px]" />
        <div className="h-[20px] bg-[#424242] flex items-stretch justify-between pr-[5px] shrink-0">
          <div className="w-[53px] bg-[#535353] flex items-center justify-center text-[8.5px] font-semibold text-[#e4e4e4]">Pathfinder</div>
          <div className="flex items-center"><Menu /></div>
        </div>
        <Label className="mt-[5px]">Shape Modes:</Label>
        <div className="mt-[4px] h-[18px] flex items-center pl-[4px] gap-[11px]">
          {pathIcon([[3,3,9,9,1],[6,6,9,9]])}{pathIcon([[3,3,9,9,0],[8,8,7,7,1]])}{pathIcon([[3,3,9,9,1],[6,6,6,6],[8,8,7,7,1]])}{pathIcon([[3,3,9,9,0],[6,6,6,6,1],[10,10,5,5]])}
          <div className="w-[58px] h-[15px] bg-[#595959] text-[8.5px] text-[#7d7d7d] font-medium flex items-center justify-center">Expand</div>
        </div>
        <Label className="mt-[4px]">Pathfinders:</Label>
        <div className="mt-[5px] h-[18px] flex pl-[8px] gap-[11.6px]">
          {pathIcon([[3,3,9,9,1],[6,6,9,9,0]])}{pathIcon([[3,3,9,9,1],[6,6,9,9]])}{pathIcon([[3,3,8,8],[7,7,8,8,1]])}{pathIcon([[3,3,12,12,1],[6,6,6,6]])}{pathIcon([[3,3,8,8,1],[7,7,8,8,1],[7,7,4,4]])}{pathIcon([[3,3,9,9],[6,6,9,9,1]])}
        </div>
        <div className="h-[7px]" />
        <div className="h-[21px] bg-[#424242] flex items-stretch pr-[5px] text-[8.5px] font-semibold shrink-0">
          <div className="w-[32px] text-[#a8a8a8] flex items-center pl-[6px] overflow-hidden whitespace-nowrap border-r border-[#3c3c3c]">Chara</div>
          <div className="w-[31px] text-[#a8a8a8] flex items-center pl-[6px] overflow-hidden whitespace-nowrap border-r border-[#3c3c3c]">Parag</div>
          <div className="w-[32px] text-[#a8a8a8] flex items-center pl-[6px] overflow-hidden whitespace-nowrap">OpenT</div>
          <div className="w-[57px] bg-[#535353] text-[#e4e4e4] flex items-center justify-center">Appearance</div>
          <div className="ml-auto flex items-center"><Menu /></div>
        </div>
        <div className="mx-[4px] mt-[4px] flex-1 border border-[#5c5c5c] flex flex-col">
          <div className="h-[19px] flex items-center border-b border-[#5d5d5d] text-[9px] text-[#c8c8c8] font-semibold">
            <div className="ml-[3px] w-[14px] h-[14px] bg-white border border-[#bbbbbb]" />
            <span className="ml-[20px]">Path</span>
          </div>
          <AppRow mid><span className="underline decoration-dotted">Stroke:</span><div className="ml-[5px] w-[13px] h-[13px] bg-black border-2 border-[#cfcfcf]" /><span className="ml-[12px]">1 pt</span></AppRow>
          <AppRow mid><span className="w-[33px]">Fill:</span><NoneSwatch s={13} /></AppRow>
          <AppRow eye={false}><span className="underline">Opacity:</span><span className="ml-[3px]">Default</span></AppRow>
        </div>
        <div className="h-[18px] flex items-center pl-[9px] text-[#cfcfcf] shrink-0">
          <div className="w-[8px] h-[8px] border-2 border-[#cfcfcf]" />
          <div className="ml-[12px] w-[8px] h-[8px] bg-[#b0b0b0] border border-[#cfcfcf]" />
          <span className="ml-[9px] text-[10px] italic font-['Liberation_Serif',serif]">fx.</span>
          <Ban size={10} strokeWidth={2} className="ml-[56px]" />
          <div className="ml-[11px] w-[8px] h-[8px] bg-[#6c6c6c]" />
          <Trash2 size={10} className="ml-[11px] text-[#6c6c6c]" />
        </div>
        <div className="h-[5px] bg-[#484848] flex items-center justify-center"><Grip /></div>
      </div>
    </div>
  );
}
